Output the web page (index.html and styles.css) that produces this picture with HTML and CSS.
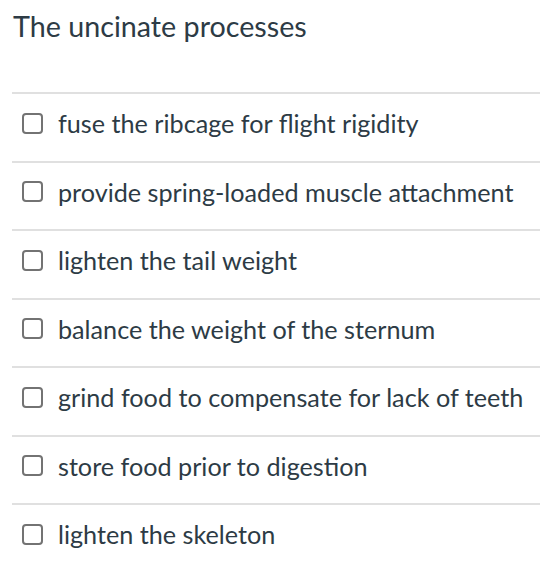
FILE: index.html
```html
<!DOCTYPE html>
<html>
<head>
<meta charset="utf-8">
<link rel="stylesheet" href="styles.css">
</head>
<body>
<div class="question">
  <h1 class="title">The uncinate processes</h1>
  <ul class="answers">
    <li class="answer"><span class="box"></span><span class="label">fuse the ribcage for flight rigidity</span></li>
    <li class="answer"><span class="box"></span><span class="label">provide spring-loaded muscle attachment</span></li>
    <li class="answer"><span class="box"></span><span class="label">lighten the tail weight</span></li>
    <li class="answer"><span class="box"></span><span class="label">balance the weight of the sternum</span></li>
    <li class="answer"><span class="box"></span><span class="label">grind food to compensate for lack of teeth</span></li>
    <li class="answer"><span class="box"></span><span class="label">store food prior to digestion</span></li>
    <li class="answer"><span class="box"></span><span class="label">lighten the skeleton</span></li>
  </ul>
</div>
</body>
</html>
```
FILE: styles.css
```css
html, body {
  margin: 0;
  padding: 0;
  background: #ffffff;
}
.question {
  font-family: Lato, "Open Sans", sans-serif;
  color: #2d3b45;
}
.title {
  margin: 0;
  padding: 8px 0 0 13px;
  height: 92px;
  box-sizing: border-box;
  font-size: 28.7px;
  font-weight: 400;
  line-height: 36px;
}
.answers {
  list-style: none;
  margin: 0 0 0 12px;
  padding: 0;
}
.answer {
  display: flex;
  align-items: center;
  gap: 15px;
  height: 68.5px;
  box-sizing: border-box;
  border-top: 2px solid #e0e0e0;
  padding-left: 10px;
  padding-bottom: 8px;
}
.box {
  width: 17px;
  height: 17px;
  border: 2px solid #737373;
  border-radius: 4px;
  flex: none;
}
.label {
  font-size: 25.2px;
  line-height: 30px;
}
```
